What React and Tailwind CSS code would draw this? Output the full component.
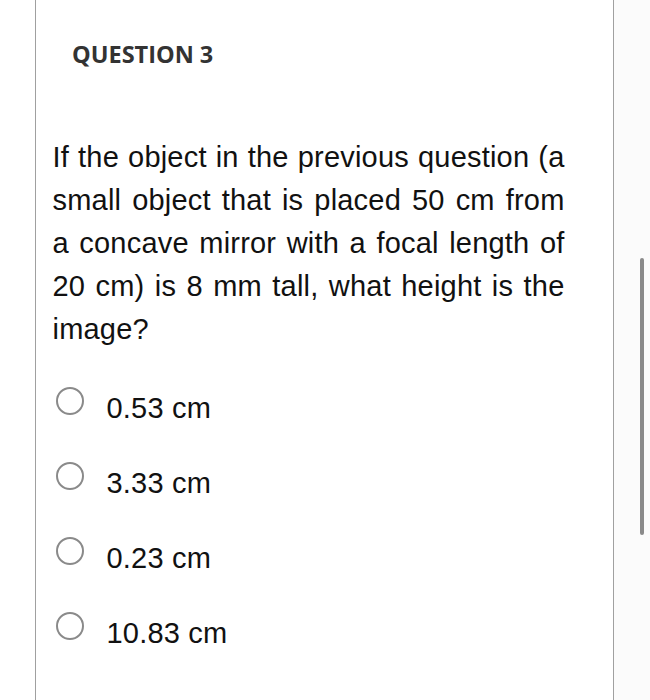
const options = ["0.53 cm", "3.33 cm", "0.23 cm", "10.83 cm"];

export default function App() {
  return (
    <div className="flex h-[700px] w-[650px] overflow-hidden bg-white">
      {/* left gutter */}
      <div className="w-[35px] shrink-0 bg-white" />

      {/* question card */}
      <div className="w-[579px] shrink-0 border-x-[1.5px] border-[#a0a0a0] bg-white pt-[42px]">
        <h2 className="pl-[36px] font-['Open_Sans',sans-serif] text-[23.5px] font-bold leading-[24px] text-[#333333]">
          QUESTION 3
        </h2>

        <p className="mt-[70px] ml-[16.5px] w-[512px] text-justify font-['Liberation_Sans',Arial,sans-serif] text-[29px] leading-[43px] tracking-[0.2px] text-[#111111]">
          If the object in the previous question (a small object that is placed 50 cm from a concave mirror with a focal length of 20 cm) is 8 mm tall, what height is the image?
        </p>

        <div className="mt-[36px] flex flex-col gap-[32px] pl-[19.5px]">
          {options.map((opt) => (
            <label key={opt} className="flex items-start">
              <span className="h-[28px] w-[28px] shrink-0 rounded-full border-2 border-[#8a8a8a] bg-white" />
              <span className="ml-[23px] font-['Liberation_Sans',Arial,sans-serif] text-[29px] leading-[43px] tracking-[0.2px] text-[#111111]">
                {opt}
              </span>
            </label>
          ))}
        </div>
      </div>

      {/* scroll track */}
      <div className="flex-1 bg-[#fbfbfb] pl-[26px] pt-[258px]">
        <div className="h-[277px] w-[4px] rounded-full bg-[#8a8a8a]" />
      </div>
    </div>
  );
}
